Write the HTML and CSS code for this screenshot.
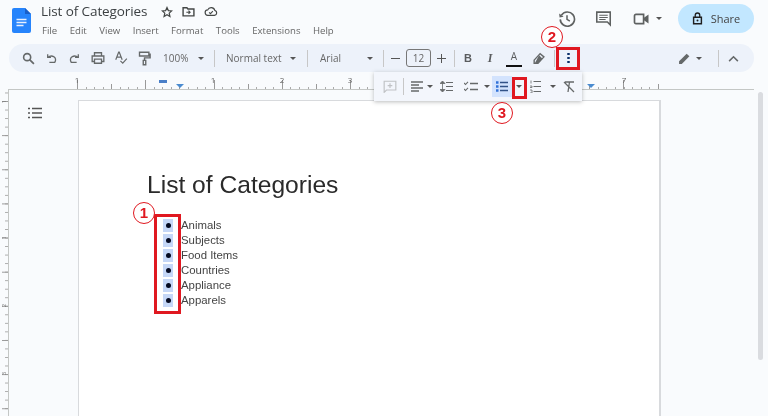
FILE: index.html
```html
<!DOCTYPE html>
<html lang="en">
<head>
<meta charset="utf-8">
<title>List of Categories</title>
<link rel="stylesheet" href="styles.css">
</head>
<body>
<div class="app">
  <header class="head">
    <svg class="logo" width="19" height="25" viewBox="0 0 19 25"><path d="M2 0h11l6 6v17a2 2 0 0 1-2 2H2a2 2 0 0 1-2-2V2a2 2 0 0 1 2-2z" fill="#2684fc"/><path d="M13 0l6 6h-6z" fill="#1a5fc8"/><path d="M4.500 11.500h10M4.500 14.500h10M4.500 17.500h7" stroke="#e8f0fe" stroke-width="1.400"/></svg>
    <div class="titles">
      <div class="titlerow">
        <span class="doctitle">List of Categories</span>
        <svg class="hi star" width="12" height="12" viewBox="0 0 24 24"><path d="M12 3l2.700 6.200 6.800.6-5.100 4.500 1.500 6.700L12 17.500 6.100 21l1.500-6.700-5.100-4.500 6.800-.6z" fill="none" stroke="#444746" stroke-width="2.400"/></svg>
        <svg class="hi" width="13" height="13" viewBox="0 0 24 24"><path d="M2 5h7l2 2.500h11V20H2z" fill="none" stroke="#444746" stroke-width="2.600"/><path d="M12 10.500l3 3-3 3M8 13.500h7" fill="none" stroke="#444746" stroke-width="2"/></svg>
        <svg class="hi" width="14" height="13" viewBox="0 0 24 24"><path d="M6.500 19a5 5 0 0 1-.6-10A7 7 0 0 1 19 9.800 4.700 4.700 0 0 1 18.500 19z" fill="none" stroke="#444746" stroke-width="2.200"/><path d="M8.500 13.500l2.500 2.500 4.500-4.500" fill="none" stroke="#444746" stroke-width="2"/></svg>
      </div>
      <nav class="menu">
        <span>File</span><span>Edit</span><span>View</span><span>Insert</span><span>Format</span><span>Tools</span><span>Extensions</span><span>Help</span>
      </nav>
    </div>
    <div class="headright">
      <svg class="hist" width="18" height="18" viewBox="0 0 24 24"><path d="M4.500 7A9.500 9.500 0 1 1 3 12.500" fill="none" stroke="#444746" stroke-width="2.200"/><path d="M1.500 4.500l.6 5.500 5.400-1z" fill="#444746"/><path d="M12 7v5.500l3.800 2.300" fill="none" stroke="#444746" stroke-width="2"/></svg>
      <svg class="cmt" width="17" height="17" viewBox="0 0 24 24"><path d="M2.500 3h19v18l-4-4h-15z" fill="none" stroke="#444746" stroke-width="2.200"/><path d="M6 7.500h12M6 10.500h12M6 13.500h9" stroke="#444746" stroke-width="1.500"/></svg>
      <svg class="cam" width="17" height="14" viewBox="0 0 24 20"><path d="M2 5.500a2 2 0 0 1 2-2h11v13H4a2 2 0 0 1-2-2z" fill="none" stroke="#444746" stroke-width="2.400"/><path d="M15 8.500l7-5v13l-7-5z" fill="#444746"/></svg>
      <span class="caret camcaret"></span>
      <div class="share">
        <svg width="11" height="13" viewBox="0 0 16 20"><path d="M2 8h12v10H2z" fill="none" stroke="#1f1f1f" stroke-width="2.200"/><path d="M4.500 8V5a3.500 3.500 0 0 1 7 0v3" fill="none" stroke="#1f1f1f" stroke-width="2"/><circle cx="8" cy="13" r="1.500" fill="#1f1f1f"/></svg>
        <span>Share</span>
      </div>
    </div>
  </header>

  <div class="toolbar">
    <span class="tool w24 first"><svg width="13" height="13" viewBox="0 0 24 24"><circle cx="9.500" cy="9.500" r="6.500" fill="none" stroke="#444746" stroke-width="3"/><path d="M14 14l8 8" stroke="#444746" stroke-width="3.200"/></svg></span>
    <span class="tool w23"><svg width="13" height="13" viewBox="0 0 24 24"><path d="M5 4v6h6" fill="none" stroke="#444746" stroke-width="2.400"/><path d="M5 10c4-3 8-3 11-1.500 4 2 4.500 7 2 10.500H8" fill="none" stroke="#444746" stroke-width="2.400"/></svg></span>
    <span class="tool w23"><svg width="13" height="13" viewBox="0 0 24 24"><path d="M19 4v6h-6" fill="none" stroke="#444746" stroke-width="2.400"/><path d="M19 10c-4-3-8-3-11-1.500-4 2-4.500 7-2 10.500h10" fill="none" stroke="#444746" stroke-width="2.400"/></svg></span>
    <span class="tool w23"><svg width="14" height="14" viewBox="0 0 24 24"><path d="M6 8V3h12v5M6 18H2V8.500h20V18h-4M6 14h12v7H6z" fill="none" stroke="#444746" stroke-width="2.300"/></svg></span>
    <span class="tool w23"><svg width="14" height="14" viewBox="0 0 24 24"><path d="M3 15L8 2h1l5 13M5 10.500h7" fill="none" stroke="#444746" stroke-width="2"/><path d="M11 17l4 4 7-8" fill="none" stroke="#444746" stroke-width="2"/></svg></span>
    <span class="tool w24"><svg width="13" height="15" viewBox="0 0 20 24"><path d="M2 2h15v6H2zM17 5h2v6h-9v4" fill="none" stroke="#444746" stroke-width="2.200"/><path d="M8 15h4v7H8z" fill="none" stroke="#444746" stroke-width="2.200"/></svg></span>
    <span class="ttxt zoom">100%</span><span class="caret c-zoom"></span>
    <span class="sep s-a"></span>
    <span class="ttxt style">Normal text</span><span class="caret c-style"></span>
    <span class="sep s-b"></span>
    <span class="ttxt font">Arial</span><span class="caret c-font"></span>
    <span class="sep s-c"></span>
    <span class="glyph minus"></span>
    <span class="size">12</span>
    <span class="glyph plus"></span>
    <span class="sep s-d"></span>
    <span class="fmt b">B</span>
    <span class="fmt i">I</span>
    <span class="fmt a">A</span>
    <span class="tool hl"><svg width="13" height="13" viewBox="0 0 24 24"><path d="M4 15L15 3l7 6-11 12H4z" fill="none" stroke="#444746" stroke-width="2.600"/><path d="M13 6l6 6-8 9H5z" fill="#444746"/></svg></span>
    <span class="sep s-e"></span>
    <span class="dots"><i></i><i></i><i></i></span>
    <span class="tool pen"><svg width="13" height="13" viewBox="0 0 24 24"><path d="M2 22v-5L16 3l5 5L7 22z" fill="#444746"/></svg></span>
    <span class="caret c-pen"></span>
    <span class="sep s-f"></span>
    <svg class="chev" width="11" height="7" viewBox="0 0 12 8"><path d="M1 7l5-5 5 5" fill="none" stroke="#444746" stroke-width="1.800"/></svg>
  </div>

  <div class="ruler">
    <div class="rscale">
      <span class="rn n1">1</span><span class="rn n2">1</span><span class="rn n3">2</span><span class="rn n4">3</span><span class="rn n5">7</span>
    </div>
  </div>

  <div class="work">
    <div class="vruler">
      <span class="vn v1">1</span><span class="vn v2">1</span><span class="vn v3">2</span><span class="vn v4">3</span>
    </div>
    <div class="side">
      <svg width="14" height="12" viewBox="0 0 14 12"><path d="M0 1.500h2M4 1.500h10M0 6h2M4 6h10M0 10.500h2M4 10.500h10" stroke="#555" stroke-width="1.500"/></svg>
    </div>
    <main class="page">
      <h1 class="h">List of Categories</h1>
      <ul class="list">
        <li><b></b><span>Animals</span></li>
        <li><b></b><span>Subjects</span></li>
        <li><b></b><span>Food Items</span></li>
        <li><b></b><span>Countries</span></li>
        <li><b></b><span>Appliance</span></li>
        <li><b></b><span>Apparels</span></li>
      </ul>
    </main>
    <div class="scrollzone"><div class="thumb"></div></div>
  </div>

  <div class="marker m-left"></div>
  <div class="marker m-mid"></div>
  <div class="marker m-right"></div>

  <div class="float">
    <svg class="f-add" width="14" height="13" viewBox="0 0 24 22"><path d="M2 2h20v15H6l-4 4z" fill="none" stroke="#b4b6b8" stroke-width="2"/><path d="M12 5.500v8M8 9.500h8" stroke="#b4b6b8" stroke-width="2"/></svg>
    <span class="sep f-sep"></span>
    <svg class="f-align" width="12" height="11" viewBox="0 0 12 11"><path d="M0 1h12M0 4h8M0 7h12M0 10h8" stroke="#444746" stroke-width="1.300"/></svg>
    <span class="caret f-c1"></span>
    <svg class="f-line" width="13" height="11" viewBox="0 0 13 11"><path d="M2.500 0L5 2.500H0zM2.500 11L0 8.500h5zM2.500 2v7" fill="#444746" stroke="#444746" stroke-width=".8"/><path d="M6 1.500h7M6 5.500h7M6 9.500h7" stroke="#444746" stroke-width="1.200"/></svg>
    <svg class="f-check" width="14" height="11" viewBox="0 0 14 11"><path d="M0 2l1.500 1.500L4 .8M0 8l1.500 1.500L4 6.800" fill="none" stroke="#444746" stroke-width="1.100"/><path d="M6 2.500h8M6 8.500h8" stroke="#444746" stroke-width="1.300"/></svg>
    <span class="caret f-c2"></span>
    <span class="f-bul"><svg width="12" height="11" viewBox="0 0 12 11"><path d="M0 1.500h2.500M0 5.500h2.500M0 9.500h2.500" stroke="#0b57d0" stroke-width="2.400"/><path d="M4 1.500h8M4 5.500h8M4 9.500h8" stroke="#0b2f6a" stroke-width="1.400"/></svg></span>
    <span class="caret f-c3"></span>
    <svg class="f-num" width="11" height="13" viewBox="0 0 11 13"><path d="M1 .5v3M0 6h2v1.500H0M0 10h2v3H0" fill="none" stroke="#444746" stroke-width=".8"/><path d="M3.500 1.500h7.500M3.500 6.500h7.500M3.500 11.500h7.500" stroke="#444746" stroke-width="1.200"/></svg>
    <span class="caret f-c4"></span>
    <svg class="f-clear" width="12" height="12" viewBox="0 0 12 12"><path d="M2 1h9M6.500 1L5 11M1 1l10 10" fill="none" stroke="#444746" stroke-width="1.300"/></svg>
  </div>

  <div class="box box1"></div>
  <div class="box box2"></div>
  <div class="box box3"></div>
  <div class="badge badge1">1</div>
  <div class="badge badge2">2</div>
  <div class="badge badge3">3</div>
</div>
</body>
</html>
```

FILE: styles.css
```css
* { box-sizing: border-box; }
html, body { margin: 0; padding: 0; }
body { background: #f9fbfd; font-family: "Roboto", "Liberation Sans", sans-serif; color: #444746; }
.app { position: relative; width: 768px; height: 416px; overflow: hidden; background: #f9fbfd; filter: blur(.3px); }

.head { display: flex; height: 44px; padding: 8px 0 0 12px; }
.logo { flex: none; }
.titles { margin: -5px 0 0 10px; }
.titlerow { display: flex; align-items: center; height: 17px; }
.doctitle { font: 13.500px/17px "Open Sans", sans-serif; color: #3c4043; letter-spacing: -.1px; }
.hi { margin-left: 9px; }
.star { margin-left: 14px; }
.menu { display: flex; gap: 12.500px; margin: 4px 0 0 1px; font: 9.600px/14px "Open Sans", sans-serif; color: #666; }

.headright { display: flex; align-items: flex-start; margin-left: auto; }
.headright > svg { opacity: .85; }
.hist { margin: 2px 0 0 0; }
.cmt { margin: 2px 0 0 19px; }
.cam { margin: 4px 0 0 21px; }
.camcaret { margin: 9px 0 0 6px; }
.share { display: flex; align-items: center; justify-content: center; gap: 8px; width: 76px; height: 29px; margin: -4px 14px 0 16px; background: #c2e7ff; border-radius: 15px; font: 11px/1 "Open Sans", sans-serif; color: #444; }

.toolbar { display: flex; align-items: center; height: 28px; margin: 0 14px 0 9px; background: #edf2fa; border-radius: 14px; }
.toolbar svg, .float svg { opacity: .8; }
.tool { display: flex; align-items: center; justify-content: center; flex: none; height: 20px; }
.first { margin-left: 7px; }
.w23 { width: 23px; }
.w24 { width: 24px; }
.ttxt { font: 10px/1 "Open Sans", sans-serif; color: #666; flex: none; white-space: nowrap; }
.caret { display: block; flex: none; width: 0; height: 0; border: 3px solid transparent; border-top: 3px solid #555; border-bottom: 0; }
.sep { display: block; flex: none; width: 1px; height: 17px; background: #c7c7c7; }
.zoom { margin-left: 7px; width: 26px; }
.c-zoom { margin-left: 9px; }
.s-a { margin-left: 10px; }
.style { margin-left: 11px; width: 55px; }
.c-style { margin-left: 9px; }
.s-b { margin-left: 11px; }
.font { margin-left: 12px; width: 22px; }
.c-font { margin-left: 25px; }
.s-c { margin-left: 10px; }
.glyph { display: block; position: relative; flex: none; width: 9px; height: 1px; background: #555; }
.minus { margin-left: 7px; }
.size { flex: none; width: 25px; height: 18px; margin-left: 6px; border: 1px solid #777; border-radius: 3px; font: 10px/16px "Open Sans", sans-serif; text-align: center; color: #666; }
.plus { margin-left: 6px; }
.plus::after { content: ""; position: absolute; left: 4px; top: -4px; width: 1px; height: 9px; background: #555; }
.s-d { margin-left: 8px; }
.fmt { flex: none; width: 12px; text-align: center; color: #5a5c5e; }
.b { margin-left: 7px; font: 700 11px/1 "Liberation Sans", sans-serif; }
.i { margin-left: 10px; font: italic 700 12px/1 "Liberation Serif", serif; }
.a { margin-left: 10px; width: 16px; height: 17px; font: 10px/12px "Open Sans", sans-serif; border-bottom: 2.500px solid #111; }
.hl { margin-left: 10px; width: 13px; }
.s-e { margin-left: 9px; }
.dots { display: flex; flex-direction: column; gap: 1.500px; flex: none; margin-left: 12px; }
.dots i { display: block; width: 2.500px; height: 2.500px; border-radius: 50%; background: #0b2f6a; }
.pen { margin-left: 108px; width: 13px; }
.c-pen { margin-left: 5px; }
.s-f { margin-left: 16px; }
.chev { margin-left: 9px; flex: none; }

.ruler { height: 18px; margin: 0 14px 0 8px; border-bottom: 1px solid #c4c7c5; }
.rscale { position: relative; height: 17px; margin-left: 69px; width: 583px; background:
  repeating-linear-gradient(90deg, #999 0 1px, transparent 1px 68.300px) 0 100% / 100% 9px no-repeat,
  repeating-linear-gradient(90deg, #999 0 1px, transparent 1px 34.150px) 0 100% / 100% 5px no-repeat,
  repeating-linear-gradient(90deg, #aaa 0 1px, transparent 1px 8.540px) 0 100% / 100% 2px no-repeat; }
.rn { position: absolute; top: 4px; font: 8px/1 "Open Sans", sans-serif; color: #666; transform: translateX(-50%); }
.n1 { left: 0; }
.n2 { left: 136px; }
.n3 { left: 205px; }
.n4 { left: 273px; }
.n5 { left: 547px; }
.marker { position: absolute; }
.m-left { left: 159px; top: 80px; width: 8px; height: 3px; background: #4a7fc8; }
.m-mid { left: 176px; top: 84px; width: 0; height: 0; border: 4px solid transparent; border-top: 4px solid #4a8bd0; border-bottom: 0; }
.m-right { left: 587px; top: 84px; width: 0; height: 0; border: 4px solid transparent; border-top: 4px solid #4a8bd0; border-bottom: 0; }

.work { display: flex; height: 326px; }
.vruler { position: relative; flex: none; width: 9px; border-right: 1px solid #c4c7c5; background:
  linear-gradient(#999 1px, transparent 1px) 100% 11px / 6px 34.150px repeat-y,
  linear-gradient(#aaa 1px, transparent 1px) 100% 2.500px / 3px 8.540px repeat-y; }
.vn { position: absolute; left: 1px; width: 6px; text-align: center; font: 6px/7px "Open Sans", sans-serif; color: #777; transform: rotate(-90deg); }
.v1 { top: 8px; }
.v2 { top: 144px; }
.v3 { top: 212px; }
.v4 { top: 280px; }
.side { flex: none; width: 69px; padding: 14px 0 0 19px; }
.page { flex: none; width: 583px; height: 326px; margin-top: 10px; padding: 68px 0 0 68px; background: #fff; border: 1px solid #d8dadd; border-bottom: 0; border-right-width: 2px; }
.h { margin: 0; font: 400 24.600px/32px "Liberation Sans", sans-serif; color: #2a2a2a; }
.list { list-style: none; margin: 17px 0 0; padding: 0 0 0 16px; font: 11.400px/15px "Liberation Sans", sans-serif; color: #444; }
.list li { display: flex; align-items: center; height: 15px; }
.list b { display: flex; align-items: center; justify-content: center; flex: none; width: 10px; height: 13px; margin-right: 8px; background: #c5d7f7; }
.list b::before { content: ""; width: 5px; height: 5px; border-radius: 50%; background: #050a20; }
.scrollzone { flex: none; padding: 2px 0 0 97px; }
.thumb { width: 5px; height: 268px; background: #dadce0; border-radius: 3px; }

.float { position: absolute; left: 374px; top: 72px; width: 208px; height: 29px; display: flex; align-items: center; background: #f3f6fc; box-shadow: 0 1px 4px rgba(60,64,67,.35); }
.f-add { margin-left: 9px; flex: none; }
.f-sep { margin-left: 6px; }
.f-align { margin-left: 7px; flex: none; }
.f-c1 { margin-left: 4px; }
.f-line { margin-left: 7px; flex: none; }
.f-check { margin-left: 11px; flex: none; }
.f-c2 { margin-left: 6px; }
.f-bul { display: flex; align-items: center; justify-content: center; flex: none; width: 20px; height: 21px; margin-left: 2px; background: #d3e3fd; }
.f-c3 { margin-left: 4px; }
.f-num { margin-left: 8px; flex: none; }
.f-c4 { margin-left: 9px; }
.f-clear { margin-left: 7px; flex: none; }

.box { position: absolute; border: 3px solid #e01820; }
.box1 { left: 154px; top: 214px; width: 27px; height: 100px; }
.box2 { left: 556px; top: 47px; width: 24px; height: 23px; }
.box3 { left: 512px; top: 77px; width: 15px; height: 22px; }
.badge { position: absolute; width: 22px; height: 22px; border: 1.500px solid #e01820; border-radius: 50%; background: #fff; color: #e01820; font: 700 15px/19px "Liberation Sans", sans-serif; text-align: center; }
.badge1 { left: 133px; top: 202px; }
.badge2 { left: 541px; top: 26px; }
.badge3 { left: 491px; top: 102px; }
```
